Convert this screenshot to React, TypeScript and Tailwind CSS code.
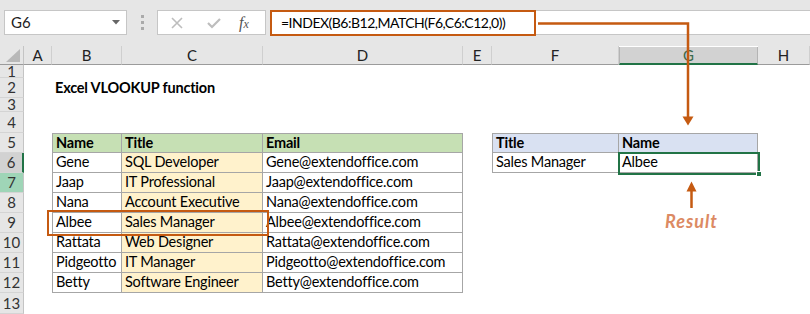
import clsx from "clsx";

const cols = ["A", "B", "C", "D", "E", "F", "G", "H"];
const rowNums = [1, 2, 3, 4, 5, 6, 7, 8, 9, 10, 11, 12, 13];

const data: Record<string, string> = {
  B2: "Excel VLOOKUP function",
  B5: "Name",
  C5: "Title",
  D5: "Email",
  F5: "Title",
  G5: "Name",
  F6: "Sales Manager",
  G6: "Albee",
};

const people = [
  ["Gene", "SQL Developer"],
  ["Jaap", "IT Professional"],
  ["Nana", "Account Executive"],
  ["Albee", "Sales Manager"],
  ["Rattata", "Web Designer"],
  ["Pidgeotto", "IT Manager"],
  ["Betty", "Software Engineer"],
];
people.forEach(([name, title], i) => {
  const r = i + 6;
  data["B" + r] = name;
  data["C" + r] = title;
  data["D" + r] = name + "@extendoffice.com";
});

const bold = new Set(["B2", "B5", "C5", "D5", "F5", "G5"]);

function inRange(c: string, r: number, c1: string, c2: string, r1: number, r2: number) {
  const i = cols.indexOf(c);
  return i >= cols.indexOf(c1) && i <= cols.indexOf(c2) && r >= r1 && r <= r2;
}

function Cell({ c, r }: { c: string; r: number }) {
  const key = c + r;
  const t1 = inRange(c, r, "B", "D", 5, 12);
  const t2 = inRange(c, r, "F", "G", 5, 6);
  const inTable = t1 || t2;
  return (
    <div
      className={clsx(
        "flex items-center overflow-visible whitespace-nowrap pl-[3px] text-[14.5px] leading-none tracking-[-0.2px] text-black",
        inTable && "border-r border-b border-[#a6a6a6]",
        inTable && (c === "B" || c === "F") && "border-l",
        inTable && r === 5 && "border-t",
        t1 && r === 5 && "bg-[#c6e0b4]",
        t2 && r === 5 && "bg-[#d9e1f2]",
        c === "C" && r > 5 && r <= 12 && "bg-[#fff2cc]",
        bold.has(key) && "font-bold",
        key === "B2" && "relative z-10"
      )}
    >
      {data[key] ?? ""}
    </div>
  );
}

function RowHeader({ r }: { r: number }) {
  return (
    <div
      className={clsx(
        "flex items-center justify-center overflow-hidden border-b border-[#d4d4d4] text-[15px] leading-none text-[#333]",
        r === 6 ? "border-r-2 border-r-[#217346] bg-[#d2d2d2]" : "border-r border-r-[#c4c4c4]",
        r === 7 ? "bg-[#9fd5b7]" : r !== 6 && "bg-[#e6e6e6]"
      )}
    >
      {r}
    </div>
  );
}

function ColHeader({ c }: { c: string }) {
  const sel = c === "G";
  return (
    <div
      className={clsx(
        "flex items-center justify-center text-[15px] leading-none",
        sel
          ? "mt-[1px] border-x border-[#b4b4b4] border-b-2 border-b-[#217346] bg-[#d2d2d2] text-[#3b6b4f]"
          : "border-r border-r-[#cfcfcf] border-b border-b-[#9b9b9b] bg-[#e6e6e6] text-[#222]"
      )}
    >
      {c}
    </div>
  );
}

function FormulaBar() {
  return (
    <div className="flex h-[46px] items-start bg-[#e6e6e6] pt-[10px]">
      <div className="ml-[4px] flex h-[25px] w-[123px] items-center justify-between border border-[#c6c6c6] bg-white pl-[6px] pr-[6px] text-[15px] text-[#222]">
        <span>G6</span>
        <svg width="8" height="5" viewBox="0 0 8 5">
          <path d="M0 0 H8 L4 4.5 Z" fill="#666" />
        </svg>
      </div>
      <div className="ml-[14px] flex h-[25px] flex-col justify-center gap-[3px]">
        <span className="h-[3px] w-[3px] bg-[#aaa]" />
        <span className="h-[3px] w-[3px] bg-[#aaa]" />
        <span className="h-[3px] w-[3px] bg-[#aaa]" />
      </div>
      <div className="ml-[13px] flex h-[25px] w-[109px] items-center border border-[#c6c6c6] bg-white">
        <svg width="14" height="14" viewBox="0 0 14 14" className="ml-[12px]">
          <path d="M2 2 L12 12 M12 2 L2 12" stroke="#bdbdbd" strokeWidth="1.6" />
        </svg>
        <svg width="16" height="14" viewBox="0 0 16 14" className="ml-[22px]">
          <path d="M2 7 L6 11 L14 3" stroke="#bdbdbd" strokeWidth="2.2" fill="none" />
        </svg>
        <span className="ml-[17px] font-['Liberation_Serif',serif] text-[16px] italic text-[#555]">
          f<span className="text-[12px]">x</span>
        </span>
      </div>
      <div className="ml-[4px] flex h-[25px] flex-1 items-center border-y border-[#c6c6c6] bg-white">
        <div className="-my-[1px] flex h-[26px] w-[266px] items-center border-2 border-[#c55a11] pl-[9px] text-[14px] tracking-[-0.5px] text-black">
          =INDEX(B6:B12,MATCH(F6,C6:C12,0))
        </div>
      </div>
    </div>
  );
}

export default function App() {
  return (
    <div className="relative h-[314px] w-[810px] overflow-hidden bg-white font-['Lato',sans-serif]">
      <FormulaBar />
      <div className="grid grid-cols-[24px_28px_70px_141px_200px_29px_127px_139px_1fr] grid-rows-[19px_13px_20px_14px_21px_20px_20px_20px_20px_20px_20px_20px_20px_21px]">
        <div className="relative border-r border-b border-[#9b9b9b] border-r-[#c4c4c4] bg-[#e6e6e6]">
          <svg width="14" height="13" viewBox="0 0 14 13" className="absolute right-[3px] bottom-[2px]">
            <path d="M14 0 V13 H0 Z" fill="#b8b8b8" />
          </svg>
        </div>
        {cols.map((c) => (
          <ColHeader key={c} c={c} />
        ))}
        {rowNums.map((r) => [
          <RowHeader key={"h" + r} r={r} />,
          ...cols.map((c) => <Cell key={c + r} c={c} r={r} />),
        ])}
      </div>

      {/* lookup row highlight */}
      <div className="absolute left-[47px] top-[210px] h-[26px] w-[222px] border-2 border-[#c55a11]" />

      {/* active cell G6 */}
      <div className="absolute left-[618px] top-[152px] h-[23px] w-[142px] border-2 border-[#217346]">
        <div className="absolute -right-[4px] -bottom-[4px] h-[6px] w-[6px] border border-white bg-[#217346]" />
      </div>

      <svg width="810" height="314" className="pointer-events-none absolute left-0 top-0">
        <path d="M538 23.5 H688 V118" stroke="#c55a11" strokeWidth="2.5" fill="none" />
        <path d="M682.5 116.5 H693.5 L688 125.5 Z" fill="#c55a11" />
        <path d="M691.5 190 V208" stroke="#c55a11" strokeWidth="2.5" />
        <path d="M686.5 191.5 H696.5 L691.5 181.5 Z" fill="#c55a11" />
      </svg>
      <div className="absolute left-[665px] top-[212px] text-[18px] font-bold italic leading-none tracking-[1px] text-[#dc8a63]">
        Result
      </div>
    </div>
  );
}
